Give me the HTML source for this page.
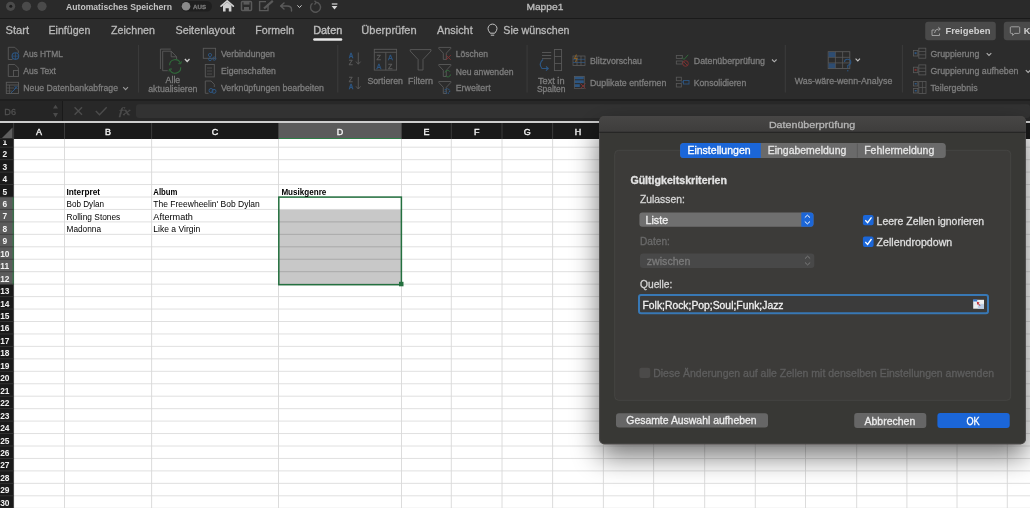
<!DOCTYPE html>
<html><head><meta charset="utf-8"><style>
html,body{margin:0;padding:0;background:#2a2a2a;width:1030px;height:508px;overflow:hidden}
svg{display:block;will-change:transform}
text{font-family:"Liberation Sans", sans-serif}
</style></head><body>
<svg width="1030" height="508" viewBox="0 0 1030 508">
<rect x="0.00" y="0.00" width="1030.00" height="18.00" fill="#2a2a2a"/>
<rect x="0.00" y="18.00" width="1030.00" height="1.00" fill="#1a1a1a"/>
<rect x="0.00" y="19.00" width="1030.00" height="80.00" fill="#2c2c2c"/>
<rect x="0.00" y="99.00" width="1030.00" height="2.00" fill="#1f1f1f"/>
<circle cx="10.6" cy="6.3" r="4.6" fill="#4a4a4a"/>
<circle cx="26.5" cy="6.3" r="4.6" fill="#4a4a4a"/>
<circle cx="42" cy="6.3" r="4.6" fill="#4a4a4a"/>
<circle cx="10.8" cy="6.3" r="1.5" fill="#1c1c1c"/>
<text x="66.00" y="9.60" font-size="8.8" fill="#c4c4c4" font-weight="bold" textLength="106.00" lengthAdjust="spacingAndGlyphs">Automatisches Speichern</text>
<rect x="181.00" y="1.00" width="31.00" height="10.50" fill="#1f1f1f" rx="5.2"/>
<circle cx="186" cy="6.3" r="4.3" fill="#8a8a8a"/>
<text x="193.00" y="8.70" font-size="6" fill="#7a7a7a" font-weight="bold" textLength="13.00" lengthAdjust="spacingAndGlyphs" stroke="#7a7a7a" stroke-width="0.3">AUS</text>
<text x="526.40" y="10.20" font-size="9.6" fill="#bdbdbd" textLength="37.00" lengthAdjust="spacingAndGlyphs" stroke="#bdbdbd" stroke-width="0.3">Mappe1</text>
<text x="5.50" y="34.20" font-size="11" fill="#b9b9b9" textLength="23.50" lengthAdjust="spacingAndGlyphs" stroke="#b9b9b9" stroke-width="0.3">Start</text>
<text x="48.50" y="34.20" font-size="11" fill="#b9b9b9" textLength="41.90" lengthAdjust="spacingAndGlyphs" stroke="#b9b9b9" stroke-width="0.3">Einfügen</text>
<text x="111.00" y="34.20" font-size="11" fill="#b9b9b9" textLength="44.00" lengthAdjust="spacingAndGlyphs" stroke="#b9b9b9" stroke-width="0.3">Zeichnen</text>
<text x="175.50" y="34.20" font-size="11" fill="#b9b9b9" textLength="59.50" lengthAdjust="spacingAndGlyphs" stroke="#b9b9b9" stroke-width="0.3">Seitenlayout</text>
<text x="255.30" y="34.20" font-size="11" fill="#b9b9b9" textLength="38.90" lengthAdjust="spacingAndGlyphs" stroke="#b9b9b9" stroke-width="0.3">Formeln</text>
<text x="313.20" y="34.20" font-size="11" fill="#bdbdbd" textLength="29.10" lengthAdjust="spacingAndGlyphs" stroke="#bdbdbd" stroke-width="0.4">Daten</text>
<text x="361.30" y="34.20" font-size="11" fill="#b9b9b9" textLength="55.30" lengthAdjust="spacingAndGlyphs" stroke="#b9b9b9" stroke-width="0.3">Überprüfen</text>
<text x="437.00" y="34.20" font-size="11" fill="#b9b9b9" textLength="35.70" lengthAdjust="spacingAndGlyphs" stroke="#b9b9b9" stroke-width="0.3">Ansicht</text>
<text x="503.30" y="34.20" font-size="11" fill="#b9b9b9" textLength="66.20" lengthAdjust="spacingAndGlyphs" stroke="#b9b9b9" stroke-width="0.3">Sie wünschen</text>
<rect x="313.20" y="38.30" width="29.10" height="2.40" fill="#e8e8e8" rx="1.2"/>
<path d="M490.2 33.2 Q488 30.5 488 28.6 A4.5 4.5 0 0 1 497 28.6 Q497 30.5 494.8 33.2 Z M490.8 35.2 L494.2 35.2" stroke="#c2c2c2" fill="none" stroke-width="1"/>
<text x="23.30" y="57.10" font-size="8.8" fill="#7e7e7e" textLength="39.60" lengthAdjust="spacingAndGlyphs" stroke="#7e7e7e" stroke-width="0.3">Aus HTML</text>
<text x="23.30" y="73.80" font-size="8.8" fill="#7e7e7e" textLength="32.60" lengthAdjust="spacingAndGlyphs" stroke="#7e7e7e" stroke-width="0.3">Aus Text</text>
<text x="23.30" y="90.80" font-size="8.8" fill="#7e7e7e" textLength="94.70" lengthAdjust="spacingAndGlyphs" stroke="#7e7e7e" stroke-width="0.3">Neue Datenbankabfrage</text>
<text x="165.60" y="83.40" font-size="8.8" fill="#7e7e7e" textLength="14.60" lengthAdjust="spacingAndGlyphs" stroke="#7e7e7e" stroke-width="0.3">Alle</text>
<text x="148.20" y="92.10" font-size="8.8" fill="#7e7e7e" textLength="49.30" lengthAdjust="spacingAndGlyphs" stroke="#7e7e7e" stroke-width="0.3">aktualisieren</text>
<text x="221.00" y="57.00" font-size="8.8" fill="#7e7e7e" textLength="54.00" lengthAdjust="spacingAndGlyphs" stroke="#7e7e7e" stroke-width="0.3">Verbindungen</text>
<text x="221.00" y="73.70" font-size="8.8" fill="#7e7e7e" textLength="54.90" lengthAdjust="spacingAndGlyphs" stroke="#7e7e7e" stroke-width="0.3">Eigenschaften</text>
<text x="221.00" y="90.50" font-size="8.8" fill="#7e7e7e" textLength="103.00" lengthAdjust="spacingAndGlyphs" stroke="#7e7e7e" stroke-width="0.3">Verknüpfungen bearbeiten</text>
<text x="367.40" y="83.60" font-size="8.8" fill="#7e7e7e" textLength="35.60" lengthAdjust="spacingAndGlyphs" stroke="#7e7e7e" stroke-width="0.3">Sortieren</text>
<text x="408.00" y="83.60" font-size="8.8" fill="#7e7e7e" textLength="25.00" lengthAdjust="spacingAndGlyphs" stroke="#7e7e7e" stroke-width="0.3">Filtern</text>
<text x="455.70" y="56.80" font-size="8.8" fill="#7e7e7e" textLength="32.30" lengthAdjust="spacingAndGlyphs" stroke="#7e7e7e" stroke-width="0.3">Löschen</text>
<text x="455.70" y="74.50" font-size="8.8" fill="#7e7e7e" textLength="57.80" lengthAdjust="spacingAndGlyphs" stroke="#7e7e7e" stroke-width="0.3">Neu anwenden</text>
<text x="455.70" y="91.40" font-size="8.8" fill="#7e7e7e" textLength="35.00" lengthAdjust="spacingAndGlyphs" stroke="#7e7e7e" stroke-width="0.3">Erweitert</text>
<text x="538.00" y="83.60" font-size="8.8" fill="#7e7e7e" textLength="26.50" lengthAdjust="spacingAndGlyphs" stroke="#7e7e7e" stroke-width="0.3">Text in</text>
<text x="536.90" y="91.80" font-size="8.8" fill="#7e7e7e" textLength="28.60" lengthAdjust="spacingAndGlyphs" stroke="#7e7e7e" stroke-width="0.3">Spalten</text>
<text x="590.00" y="64.30" font-size="8.8" fill="#7e7e7e" textLength="52.00" lengthAdjust="spacingAndGlyphs" stroke="#7e7e7e" stroke-width="0.3">Blitzvorschau</text>
<text x="590.00" y="85.70" font-size="8.8" fill="#7e7e7e" textLength="76.40" lengthAdjust="spacingAndGlyphs" stroke="#7e7e7e" stroke-width="0.3">Duplikate entfernen</text>
<text x="693.80" y="63.90" font-size="8.8" fill="#7e7e7e" textLength="71.20" lengthAdjust="spacingAndGlyphs" stroke="#7e7e7e" stroke-width="0.3">Datenüberprüfung</text>
<text x="693.80" y="85.90" font-size="8.8" fill="#7e7e7e" textLength="52.40" lengthAdjust="spacingAndGlyphs" stroke="#7e7e7e" stroke-width="0.3">Konsolidieren</text>
<text x="794.80" y="83.50" font-size="8.8" fill="#7e7e7e" textLength="97.50" lengthAdjust="spacingAndGlyphs" stroke="#7e7e7e" stroke-width="0.3">Was-wäre-wenn-Analyse</text>
<text x="930.40" y="57.30" font-size="8.8" fill="#7e7e7e" textLength="48.90" lengthAdjust="spacingAndGlyphs" stroke="#7e7e7e" stroke-width="0.3">Gruppierung</text>
<text x="930.40" y="74.10" font-size="8.8" fill="#7e7e7e" textLength="88.10" lengthAdjust="spacingAndGlyphs" stroke="#7e7e7e" stroke-width="0.3">Gruppierung aufheben</text>
<text x="930.40" y="91.10" font-size="8.8" fill="#7e7e7e" textLength="47.20" lengthAdjust="spacingAndGlyphs" stroke="#7e7e7e" stroke-width="0.3">Teilergebnis</text>
<line x1="138.60" y1="45.00" x2="138.60" y2="92.50" stroke="#3c3c3c" stroke-width="1"/>
<line x1="337.80" y1="45.00" x2="337.80" y2="92.50" stroke="#3c3c3c" stroke-width="1"/>
<line x1="527.10" y1="45.00" x2="527.10" y2="92.50" stroke="#3c3c3c" stroke-width="1"/>
<line x1="785.30" y1="45.00" x2="785.30" y2="92.50" stroke="#3c3c3c" stroke-width="1"/>
<line x1="902.40" y1="45.00" x2="902.40" y2="92.50" stroke="#3c3c3c" stroke-width="1"/>
<rect x="925.20" y="21.70" width="70.60" height="18.50" fill="#4a4a4a" rx="3"/>
<text x="945.40" y="33.90" font-size="9.2" fill="#cfcfcf" font-weight="bold" textLength="45.10" lengthAdjust="spacingAndGlyphs">Freigeben</text>
<rect x="1003.80" y="21.70" width="40.00" height="18.50" fill="#4a4a4a" rx="3"/>
<text x="1023.80" y="33.90" font-size="9.2" fill="#cfcfcf" font-weight="bold">K</text>
<path d="M221.1 6.2 L227.2 0.9 L233.3 6.2" stroke="#d0d0d0" fill="none" stroke-width="1.7" stroke-linejoin="round" stroke-linecap="round"/>
<path d="M223 5.6 L227.2 2 L231.4 5.6 L231.4 11.5 L228.8 11.5 L228.8 8.2 L225.6 8.2 L225.6 11.5 L223 11.5 Z" stroke="none" fill="#d0d0d0" stroke-width="1"/>
<rect x="241.50" y="1.60" width="10.00" height="9.00" fill="none" rx="1" stroke="#5a5a5a" stroke-width="1.5"/>
<rect x="243.50" y="1.60" width="6.00" height="3.00" fill="#5a5a5a"/>
<rect x="244.00" y="7.00" width="5.00" height="3.50" fill="#5a5a5a"/>
<path d="M268 4 L268 10.6 L259.6 10.6 L259.6 1.6 L266 1.6" stroke="#5a5a5a" fill="none" stroke-width="1.4"/>
<path d="M264 8.5 L272.8 0.8" stroke="#5a5a5a" fill="none" stroke-width="2.2"/>
<path d="M284 3 L280.6 6 L284 9 M281 6 L287 6 Q291.5 6 291.5 9.5 L291.5 11" stroke="#5a5a5a" fill="none" stroke-width="1.4" stroke-linecap="round" stroke-linejoin="round"/>
<path d="M297.4 5.3 L299.5 7.6 L301.6 5.3" stroke="#c4c4c4" fill="none" stroke-width="1.0"/>
<path d="M312.5 3.2 A5 5 0 1 0 316 2.2 M314.5 0.8 L316.2 2.3 L314.5 4.6" stroke="#555555" fill="none" stroke-width="1.4"/>
<rect x="331.80" y="3.40" width="5.60" height="1.20" fill="#d8d8d8"/>
<path d="M331.6 6 L337.4 6 L334.5 9.6 Z" stroke="none" fill="#d8d8d8" stroke-width="1"/>
<path d="M8.3 47.3 L14.8 47.3 L18.3 50.8 L18.3 53 M8.3 47.3 L8.3 59.5 L12.5 59.5" stroke="#5a5a5a" fill="none" stroke-width="0.9"/>
<circle cx="15.4" cy="56.1" r="3.3" fill="none" stroke="#2d5682" stroke-width="1.1"/>
<line x1="12.10" y1="56.10" x2="18.70" y2="56.10" stroke="#2d5682" stroke-width="0.8"/>
<line x1="15.40" y1="52.80" x2="15.40" y2="59.40" stroke="#2d5682" stroke-width="0.8"/>
<path d="M8.3 64.5 L14.8 64.5 L18.3 68 L18.3 70 M8.3 64.5 L8.3 76.5 L13 76.5" stroke="#5a5a5a" fill="none" stroke-width="0.9"/>
<rect x="13.50" y="70.50" width="5.00" height="6.00" fill="none" stroke="#5a5a5a" stroke-width="0.9"/>
<rect x="6.30" y="82.30" width="12.20" height="11.20" fill="none" stroke="#5a5a5a" stroke-width="0.9"/>
<line x1="6.30" y1="85.00" x2="18.50" y2="85.00" stroke="#5a5a5a" stroke-width="0.9"/>
<line x1="6.30" y1="88.00" x2="14.00" y2="88.00" stroke="#5a5a5a" stroke-width="0.7"/>
<line x1="6.30" y1="91.00" x2="12.00" y2="91.00" stroke="#5a5a5a" stroke-width="0.7"/>
<line x1="9.50" y1="85.00" x2="9.50" y2="93.50" stroke="#5a5a5a" stroke-width="0.7"/>
<path d="M11 93 L16 88 M14.5 86 L17.5 89 M17.5 86 L14.5 89" stroke="#2d5682" fill="none" stroke-width="1"/>
<path d="M123.2 87.2 L125.6 89.6 L128 87.2" stroke="#9a9a9a" fill="none" stroke-width="1.1"/>
<path d="M160.4 69 L160.4 49.1 L170.7 49.1" stroke="#5a5a5a" fill="none" stroke-width="0.9"/>
<path d="M167.7 70.7 L162.7 70.7 L162.7 51.2 L171.2 51.2 L176.6 56.8 L176.6 59.2 M171.2 51.2 L171.2 56.8 L176.6 56.8" stroke="#5a5a5a" fill="none" stroke-width="0.9"/>
<path d="M169.6 65.2 A5.6 5.6 0 0 1 180.4 63.2 M180.7 67.3 A5.6 5.6 0 0 1 169.8 69.4" stroke="#306a3a" fill="none" stroke-width="1.1"/>
<path d="M178.3 63.6 L180.8 63.8 L181.4 61.3 M172 69 L169.5 69 L169 71.5" stroke="#306a3a" fill="none" stroke-width="1"/>
<path d="M184.9 59.1 L187.2 61.4 L189.5 59.1" stroke="#cfcfcf" fill="none" stroke-width="1.4"/>
<rect x="203.30" y="48.30" width="12.30" height="10.00" fill="none" stroke="#5a5a5a" stroke-width="0.9"/>
<circle cx="210" cy="55" r="1.6" fill="none" stroke="#2d5682" stroke-width="0.9"/><circle cx="214.3" cy="58.6" r="1.6" fill="none" stroke="#2d5682" stroke-width="0.9"/><circle cx="210" cy="59.3" r="1.4" fill="none" stroke="#2d5682" stroke-width="0.9"/>
<rect x="205.30" y="64.50" width="9.00" height="12.40" fill="none" stroke="#5a5a5a" stroke-width="0.9"/>
<line x1="207.00" y1="68.00" x2="212.00" y2="68.00" stroke="#5a5a5a" stroke-width="0.7"/>
<line x1="207.00" y1="71.00" x2="212.00" y2="71.00" stroke="#5a5a5a" stroke-width="0.7"/>
<line x1="207.00" y1="74.00" x2="212.00" y2="74.00" stroke="#5a5a5a" stroke-width="0.7"/>
<path d="M205.3 81 L211 81 L214.3 84.3 L214.3 87 M205.3 81 L205.3 93.3 L208.5 93.3" stroke="#5a5a5a" fill="none" stroke-width="0.9"/>
<circle cx="211" cy="90.5" r="2" fill="none" stroke="#2d5682" stroke-width="1"/><circle cx="214" cy="91.3" r="2" fill="none" stroke="#2d5682" stroke-width="1"/>
<text x="348.80" y="57.60" font-size="6.4" fill="#2d5682" font-weight="bold" stroke="#2d5682" stroke-width="0.3">A</text>
<text x="348.80" y="64.60" font-size="6.4" fill="#5a5a5a" stroke="#5a5a5a" stroke-width="0.3">Z</text>
<path d="M358.3 52.5 L358.3 64.2 M356 61.6 L358.3 64.2 L360.6 61.6" stroke="#5a5a5a" fill="none" stroke-width="0.9"/>
<text x="348.80" y="82.00" font-size="6.4" fill="#5a5a5a" stroke="#5a5a5a" stroke-width="0.3">Z</text>
<text x="348.80" y="89.40" font-size="6.4" fill="#2d5682" font-weight="bold" stroke="#2d5682" stroke-width="0.3">A</text>
<path d="M358.3 77 L358.3 89 M356 86.4 L358.3 89 L360.6 86.4" stroke="#5a5a5a" fill="none" stroke-width="0.9"/>
<rect x="374.30" y="49.30" width="22.30" height="20.80" fill="none" stroke="#5a5a5a" stroke-width="0.9"/>
<line x1="374.30" y1="52.30" x2="396.60" y2="52.30" stroke="#5a5a5a" stroke-width="0.9"/>
<line x1="385.80" y1="52.30" x2="385.80" y2="70.10" stroke="#5a5a5a" stroke-width="0.9"/>
<text x="376.60" y="60.30" font-size="7.2" fill="#5a5a5a" stroke="#5a5a5a" stroke-width="0.3">Z</text>
<text x="376.60" y="68.60" font-size="7.2" fill="#2d5682" stroke="#2d5682" stroke-width="0.3">A</text>
<text x="388.10" y="60.30" font-size="7.2" fill="#2d5682" stroke="#2d5682" stroke-width="0.3">A</text>
<text x="388.10" y="68.60" font-size="7.2" fill="#5a5a5a" stroke="#5a5a5a" stroke-width="0.3">Z</text>
<path d="M410.2 49.6 L431 49.6 L431 51 L423 59.5 L423 70 L418.1 70 L418.1 59.5 L410.2 51 Z" stroke="#5a5a5a" fill="none" stroke-width="0.9"/>
<path d="M438.8 47.4 L450.8 47.4 L450.8 48.4 L446.3 53.199999999999996 L446.3 59.4 L443.3 59.4 L443.3 53.199999999999996 L438.8 48.4 Z" stroke="#5a5a5a" fill="none" stroke-width="0.9"/>
<path d="M446 55.2 L450.8 59.8 M450.8 55.2 L446 59.8" stroke="#7e3030" fill="none" stroke-width="1"/>
<path d="M438.8 64.5 L450.8 64.5 L450.8 65.5 L446.3 70.3 L446.3 76.5 L443.3 76.5 L443.3 70.3 L438.8 65.5 Z" stroke="#5a5a5a" fill="none" stroke-width="0.9"/>
<path d="M445 72.5 A2.7 2.7 0 0 1 450 71.8 M450.5 74.5 A2.7 2.7 0 0 1 445.6 75.8" stroke="#306a3a" fill="none" stroke-width="1"/>
<path d="M438.8 81.5 L450.8 81.5 L450.8 82.5 L446.3 87.3 L446.3 93.5 L443.3 93.5 L443.3 87.3 L438.8 82.5 Z" stroke="#5a5a5a" fill="none" stroke-width="0.9"/>
<circle cx="447.3" cy="91" r="2.3" fill="none" stroke="#2d5682" stroke-width="1.3" stroke-dasharray="1 0.8"/>
<line x1="542.00" y1="52.50" x2="551.20" y2="52.50" stroke="#5a5a5a" stroke-width="0.9"/>
<line x1="542.00" y1="55.50" x2="551.20" y2="55.50" stroke="#5a5a5a" stroke-width="0.9"/>
<line x1="542.00" y1="58.60" x2="551.20" y2="58.60" stroke="#5a5a5a" stroke-width="0.9"/>
<rect x="554.40" y="49.50" width="7.20" height="21.10" fill="none" stroke="#5a5a5a" stroke-width="0.9"/>
<line x1="554.40" y1="56.50" x2="561.60" y2="56.50" stroke="#5a5a5a" stroke-width="0.8"/>
<line x1="554.40" y1="63.50" x2="561.60" y2="63.50" stroke="#5a5a5a" stroke-width="0.8"/>
<path d="M543 59.5 Q538 64 542 68.5 L548 68.5 M546 66.5 L548.3 68.5 L546 70.7" stroke="#2d5682" fill="none" stroke-width="1.1"/>
<rect x="573.00" y="56.00" width="12.00" height="9.50" fill="none" stroke="#5a5a5a" stroke-width="0.8"/>
<line x1="573.00" y1="59.30" x2="585.00" y2="59.30" stroke="#2d5682" stroke-width="0.8"/>
<line x1="573.00" y1="62.50" x2="585.00" y2="62.50" stroke="#2d5682" stroke-width="0.8"/>
<line x1="577.00" y1="56.00" x2="577.00" y2="65.50" stroke="#5a5a5a" stroke-width="0.8"/>
<line x1="581.00" y1="56.00" x2="581.00" y2="65.50" stroke="#5a5a5a" stroke-width="0.8"/>
<path d="M576.5 54.5 L574.5 58.5 L577 58.5 L575.5 62" stroke="#86602a" fill="none" stroke-width="1.1"/>
<rect x="574.30" y="76.30" width="9.50" height="3.00" fill="#2d5682"/>
<rect x="574.30" y="80.30" width="9.50" height="2.80" fill="#2d5682"/>
<rect x="574.30" y="84.20" width="5.50" height="2.80" fill="#2d5682"/>
<rect x="574.30" y="76.30" width="10.00" height="12.30" fill="none" stroke="#5a5a5a" stroke-width="0.7"/>
<path d="M580.5 83.5 L585.5 88.6 M585.5 83.5 L580.5 88.6" stroke="#7e3030" fill="none" stroke-width="1"/>
<rect x="676.30" y="55.50" width="6.00" height="3.00" fill="none" stroke="#5a5a5a" stroke-width="0.8"/>
<rect x="676.30" y="61.00" width="6.00" height="3.00" fill="none" stroke="#5a5a5a" stroke-width="0.8"/>
<path d="M682 57.5 L684 59.5 L688.2 54.8" stroke="#306a3a" fill="none" stroke-width="1"/>
<circle cx="685.5" cy="63.5" r="2.8" fill="none" stroke="#7e3030" stroke-width="1"/>
<line x1="683.50" y1="61.50" x2="687.50" y2="65.50" stroke="#7e3030" stroke-width="0.9"/>
<path d="M772 59.5 L774.3 61.8 L776.6 59.5" stroke="#b0b0b0" fill="none" stroke-width="1.1"/>
<rect x="676.30" y="77.20" width="5.00" height="3.50" fill="none" stroke="#5a5a5a" stroke-width="0.8"/>
<rect x="676.30" y="83.50" width="5.00" height="3.50" fill="none" stroke="#5a5a5a" stroke-width="0.8"/>
<rect x="683.50" y="80.50" width="5.50" height="3.50" fill="none" stroke="#2d5682" stroke-width="0.9"/>
<line x1="681.00" y1="82.00" x2="683.50" y2="82.00" stroke="#2d5682" stroke-width="0.9"/>
<rect x="828.20" y="51.70" width="21.60" height="16.80" fill="none" stroke="#5a5a5a" stroke-width="0.9"/>
<line x1="835.40" y1="51.70" x2="835.40" y2="68.50" stroke="#5a5a5a" stroke-width="0.8"/>
<line x1="842.60" y1="51.70" x2="842.60" y2="68.50" stroke="#5a5a5a" stroke-width="0.8"/>
<line x1="828.20" y1="57.30" x2="849.80" y2="57.30" stroke="#5a5a5a" stroke-width="0.8"/>
<line x1="828.20" y1="62.90" x2="849.80" y2="62.90" stroke="#5a5a5a" stroke-width="0.8"/>
<rect x="828.60" y="52.10" width="6.60" height="5.00" fill="#2e4d72"/>
<rect x="828.60" y="63.30" width="6.60" height="4.80" fill="#2e4d72"/>
<path d="M844.5 62 Q844.5 59.3 847.6 59.3 Q850.8 59.3 850.8 62.2 Q850.8 64.3 847.8 65.5 L847.8 68.2" stroke="#2d5682" fill="none" stroke-width="1.1"/>
<circle cx="847.8" cy="70.7" r="0.7" fill="#2d5682"/>
<path d="M855.6 58.7 L857.8 60.9 L860 58.7" stroke="#c4c4c4" fill="none" stroke-width="1.1"/>
<rect x="913.40" y="50.50" width="4.50" height="5.50" fill="none" stroke="#5a5a5a" stroke-width="0.8"/>
<rect x="918.80" y="48.20" width="7.00" height="10.00" fill="none" stroke="#5a5a5a" stroke-width="0.8"/>
<line x1="918.80" y1="51.50" x2="925.80" y2="51.50" stroke="#5a5a5a" stroke-width="0.7"/>
<line x1="918.80" y1="54.80" x2="925.80" y2="54.80" stroke="#5a5a5a" stroke-width="0.7"/>
<rect x="914.60" y="52.20" width="2.00" height="2.00" fill="#2d5682"/>
<rect x="913.40" y="67.20" width="4.50" height="5.50" fill="none" stroke="#5a5a5a" stroke-width="0.8"/>
<rect x="918.80" y="64.90" width="7.00" height="10.00" fill="none" stroke="#5a5a5a" stroke-width="0.8"/>
<line x1="918.80" y1="68.20" x2="925.80" y2="68.20" stroke="#5a5a5a" stroke-width="0.7"/>
<line x1="918.80" y1="71.50" x2="925.80" y2="71.50" stroke="#5a5a5a" stroke-width="0.7"/>
<rect x="914.60" y="68.90" width="2.00" height="2.00" fill="#7e3030"/>
<rect x="913.40" y="81.50" width="4.50" height="4.50" fill="none" stroke="#5a5a5a" stroke-width="0.8"/>
<rect x="913.40" y="88.50" width="4.50" height="4.50" fill="none" stroke="#5a5a5a" stroke-width="0.8"/>
<rect x="918.80" y="81.50" width="7.20" height="12.00" fill="none" stroke="#5a5a5a" stroke-width="0.8"/>
<line x1="922.40" y1="81.50" x2="922.40" y2="93.50" stroke="#5a5a5a" stroke-width="0.7"/>
<line x1="918.80" y1="87.50" x2="926.00" y2="87.50" stroke="#5a5a5a" stroke-width="0.7"/>
<rect x="914.70" y="83.00" width="2.00" height="1.50" fill="#2d5682"/>
<rect x="914.70" y="90.00" width="2.00" height="1.50" fill="#2d5682"/>
<path d="M986.7 53.2 L989 55.5 L991.3 53.2" stroke="#b0b0b0" fill="none" stroke-width="1.1"/>
<path d="M1025.8 70.2 L1028.1 72.5 L1030.4 70.2" stroke="#b0b0b0" fill="none" stroke-width="1.1"/>
<path d="M934.5 30 L932 30 L932 35.5 L939.5 35.5 L939.5 33.5" stroke="#a8a8a8" fill="none" stroke-width="0.9"/>
<path d="M934.5 33 Q935 29 938.5 29 L940 29 M938.3 27.2 L940.3 29 L938.3 30.8" stroke="#a8a8a8" fill="none" stroke-width="0.9"/>
<path d="M1011.2 26.8 L1018.8 26.8 Q1019.7 26.8 1019.7 27.7 L1019.7 32.5 Q1019.7 33.4 1018.8 33.4 L1014.8 33.4 L1012.6 35.4 L1012.6 33.4 L1011.2 33.4 Q1010.3 33.4 1010.3 32.5 L1010.3 27.7 Q1010.3 26.8 1011.2 26.8 Z" stroke="#a8a8a8" fill="none" stroke-width="0.9"/>
<rect x="0.00" y="101.00" width="1030.00" height="20.00" fill="#282828"/>
<rect x="0.00" y="101.00" width="62.00" height="20.00" fill="#252525"/>
<line x1="62.50" y1="101.00" x2="62.50" y2="121.00" stroke="#1a1a1a" stroke-width="1"/>
<text x="4.30" y="115.20" font-size="9.5" fill="#505050" textLength="11.70" lengthAdjust="spacingAndGlyphs" stroke="#505050" stroke-width="0.3">D6</text>
<rect x="136.00" y="104.30" width="894.00" height="13.70" fill="#323232" rx="3"/>
<rect x="0.00" y="121.00" width="1030.00" height="2.00" fill="#cdcdcd"/>
<text x="118.80" y="115.40" font-size="11" fill="#4c4c4c" textLength="11.70" lengthAdjust="spacingAndGlyphs" style="font-family:Liberation Serif,serif;font-style:italic" stroke="#4c4c4c" stroke-width="0.3">fx</text>
<path d="M53 108.6 L55.5 104.8 L58 108.6 Z M53 113 L58 113 L55.5 117.4 Z" stroke="none" fill="#4a4a4a" stroke-width="1"/>
<path d="M74.6 107.3 L82 114.7 M82 107.3 L74.6 114.7" stroke="#4c4c4c" fill="none" stroke-width="1.4"/>
<path d="M95.8 111 L99.5 114.7 L106.7 107.3" stroke="#4c4c4c" fill="none" stroke-width="1.4"/>
<rect x="0.00" y="123.00" width="1030.00" height="385.00" fill="#ffffff"/>
<line x1="13.60" y1="147.20" x2="1030.00" y2="147.20" stroke="#dcdcdc" stroke-width="0.9"/>
<line x1="13.60" y1="159.65" x2="1030.00" y2="159.65" stroke="#dcdcdc" stroke-width="0.9"/>
<line x1="13.60" y1="172.10" x2="1030.00" y2="172.10" stroke="#dcdcdc" stroke-width="0.9"/>
<line x1="13.60" y1="184.55" x2="1030.00" y2="184.55" stroke="#dcdcdc" stroke-width="0.9"/>
<line x1="13.60" y1="197.00" x2="1030.00" y2="197.00" stroke="#dcdcdc" stroke-width="0.9"/>
<line x1="13.60" y1="209.45" x2="1030.00" y2="209.45" stroke="#dcdcdc" stroke-width="0.9"/>
<line x1="13.60" y1="221.90" x2="1030.00" y2="221.90" stroke="#dcdcdc" stroke-width="0.9"/>
<line x1="13.60" y1="234.35" x2="1030.00" y2="234.35" stroke="#dcdcdc" stroke-width="0.9"/>
<line x1="13.60" y1="246.80" x2="1030.00" y2="246.80" stroke="#dcdcdc" stroke-width="0.9"/>
<line x1="13.60" y1="259.25" x2="1030.00" y2="259.25" stroke="#dcdcdc" stroke-width="0.9"/>
<line x1="13.60" y1="271.70" x2="1030.00" y2="271.70" stroke="#dcdcdc" stroke-width="0.9"/>
<line x1="13.60" y1="284.15" x2="1030.00" y2="284.15" stroke="#dcdcdc" stroke-width="0.9"/>
<line x1="13.60" y1="296.60" x2="1030.00" y2="296.60" stroke="#dcdcdc" stroke-width="0.9"/>
<line x1="13.60" y1="309.05" x2="1030.00" y2="309.05" stroke="#dcdcdc" stroke-width="0.9"/>
<line x1="13.60" y1="321.50" x2="1030.00" y2="321.50" stroke="#dcdcdc" stroke-width="0.9"/>
<line x1="13.60" y1="333.95" x2="1030.00" y2="333.95" stroke="#dcdcdc" stroke-width="0.9"/>
<line x1="13.60" y1="346.40" x2="1030.00" y2="346.40" stroke="#dcdcdc" stroke-width="0.9"/>
<line x1="13.60" y1="358.85" x2="1030.00" y2="358.85" stroke="#dcdcdc" stroke-width="0.9"/>
<line x1="13.60" y1="371.30" x2="1030.00" y2="371.30" stroke="#dcdcdc" stroke-width="0.9"/>
<line x1="13.60" y1="383.75" x2="1030.00" y2="383.75" stroke="#dcdcdc" stroke-width="0.9"/>
<line x1="13.60" y1="396.20" x2="1030.00" y2="396.20" stroke="#dcdcdc" stroke-width="0.9"/>
<line x1="13.60" y1="408.65" x2="1030.00" y2="408.65" stroke="#dcdcdc" stroke-width="0.9"/>
<line x1="13.60" y1="421.10" x2="1030.00" y2="421.10" stroke="#dcdcdc" stroke-width="0.9"/>
<line x1="13.60" y1="433.55" x2="1030.00" y2="433.55" stroke="#dcdcdc" stroke-width="0.9"/>
<line x1="13.60" y1="446.00" x2="1030.00" y2="446.00" stroke="#dcdcdc" stroke-width="0.9"/>
<line x1="13.60" y1="458.45" x2="1030.00" y2="458.45" stroke="#dcdcdc" stroke-width="0.9"/>
<line x1="13.60" y1="470.90" x2="1030.00" y2="470.90" stroke="#dcdcdc" stroke-width="0.9"/>
<line x1="13.60" y1="483.35" x2="1030.00" y2="483.35" stroke="#dcdcdc" stroke-width="0.9"/>
<line x1="13.60" y1="495.80" x2="1030.00" y2="495.80" stroke="#dcdcdc" stroke-width="0.9"/>
<line x1="13.60" y1="508.25" x2="1030.00" y2="508.25" stroke="#dcdcdc" stroke-width="0.9"/>
<line x1="64.50" y1="139.00" x2="64.50" y2="508.00" stroke="#d8d8d8" stroke-width="0.9"/>
<line x1="151.60" y1="139.00" x2="151.60" y2="508.00" stroke="#d8d8d8" stroke-width="0.9"/>
<line x1="278.50" y1="139.00" x2="278.50" y2="508.00" stroke="#d8d8d8" stroke-width="0.9"/>
<line x1="401.50" y1="139.00" x2="401.50" y2="508.00" stroke="#d8d8d8" stroke-width="0.9"/>
<line x1="451.30" y1="139.00" x2="451.30" y2="508.00" stroke="#d8d8d8" stroke-width="0.9"/>
<line x1="502.00" y1="139.00" x2="502.00" y2="508.00" stroke="#d8d8d8" stroke-width="0.9"/>
<line x1="552.60" y1="139.00" x2="552.60" y2="508.00" stroke="#d8d8d8" stroke-width="0.9"/>
<line x1="603.40" y1="139.00" x2="603.40" y2="508.00" stroke="#d8d8d8" stroke-width="0.9"/>
<line x1="653.60" y1="139.00" x2="653.60" y2="508.00" stroke="#d8d8d8" stroke-width="0.9"/>
<line x1="704.70" y1="139.00" x2="704.70" y2="508.00" stroke="#d8d8d8" stroke-width="0.9"/>
<line x1="755.30" y1="139.00" x2="755.30" y2="508.00" stroke="#d8d8d8" stroke-width="0.9"/>
<line x1="805.50" y1="139.00" x2="805.50" y2="508.00" stroke="#d8d8d8" stroke-width="0.9"/>
<line x1="856.70" y1="139.00" x2="856.70" y2="508.00" stroke="#d8d8d8" stroke-width="0.9"/>
<line x1="906.90" y1="139.00" x2="906.90" y2="508.00" stroke="#d8d8d8" stroke-width="0.9"/>
<line x1="957.00" y1="139.00" x2="957.00" y2="508.00" stroke="#d8d8d8" stroke-width="0.9"/>
<line x1="1007.30" y1="139.00" x2="1007.30" y2="508.00" stroke="#d8d8d8" stroke-width="0.9"/>
<rect x="0.00" y="123.00" width="1030.00" height="16.00" fill="#1a1a1a"/>
<rect x="278.50" y="123.00" width="123.00" height="16.00" fill="#5b5b5b"/>
<line x1="278.50" y1="138.50" x2="401.50" y2="138.50" stroke="#2d7d46" stroke-width="1"/>
<line x1="64.50" y1="123.00" x2="64.50" y2="139.00" stroke="#444444" stroke-width="0.8"/>
<line x1="151.60" y1="123.00" x2="151.60" y2="139.00" stroke="#444444" stroke-width="0.8"/>
<line x1="278.50" y1="123.00" x2="278.50" y2="139.00" stroke="#444444" stroke-width="0.8"/>
<line x1="401.50" y1="123.00" x2="401.50" y2="139.00" stroke="#444444" stroke-width="0.8"/>
<line x1="451.30" y1="123.00" x2="451.30" y2="139.00" stroke="#444444" stroke-width="0.8"/>
<line x1="502.00" y1="123.00" x2="502.00" y2="139.00" stroke="#444444" stroke-width="0.8"/>
<line x1="552.60" y1="123.00" x2="552.60" y2="139.00" stroke="#444444" stroke-width="0.8"/>
<line x1="603.40" y1="123.00" x2="603.40" y2="139.00" stroke="#444444" stroke-width="0.8"/>
<line x1="653.60" y1="123.00" x2="653.60" y2="139.00" stroke="#444444" stroke-width="0.8"/>
<line x1="704.70" y1="123.00" x2="704.70" y2="139.00" stroke="#444444" stroke-width="0.8"/>
<line x1="755.30" y1="123.00" x2="755.30" y2="139.00" stroke="#444444" stroke-width="0.8"/>
<line x1="805.50" y1="123.00" x2="805.50" y2="139.00" stroke="#444444" stroke-width="0.8"/>
<line x1="856.70" y1="123.00" x2="856.70" y2="139.00" stroke="#444444" stroke-width="0.8"/>
<line x1="906.90" y1="123.00" x2="906.90" y2="139.00" stroke="#444444" stroke-width="0.8"/>
<line x1="957.00" y1="123.00" x2="957.00" y2="139.00" stroke="#444444" stroke-width="0.8"/>
<line x1="1007.30" y1="123.00" x2="1007.30" y2="139.00" stroke="#444444" stroke-width="0.8"/>
<line x1="13.60" y1="139.00" x2="13.60" y2="508.00" stroke="#8c8c8c" stroke-width="1"/>
<line x1="13.60" y1="123.00" x2="13.60" y2="139.00" stroke="#444" stroke-width="0.8"/>
<line x1="0.00" y1="139.20" x2="13.60" y2="139.20" stroke="#5a5a5a" stroke-width="1"/>
<path d="M2 138 L12.5 127.5 L12.5 138 Z" stroke="none" fill="#5e5e5e" stroke-width="1"/>
<text x="39.05" y="134.90" font-size="9" fill="#f4f4f4" text-anchor="middle" stroke="#f4f4f4" stroke-width="0.35">A</text>
<text x="108.05" y="134.90" font-size="9" fill="#f4f4f4" text-anchor="middle" stroke="#f4f4f4" stroke-width="0.35">B</text>
<text x="215.05" y="134.90" font-size="9" fill="#f4f4f4" text-anchor="middle" stroke="#f4f4f4" stroke-width="0.35">C</text>
<text x="340.00" y="134.90" font-size="9" fill="#f4f4f4" text-anchor="middle" stroke="#f4f4f4" stroke-width="0.35">D</text>
<text x="426.40" y="134.90" font-size="9" fill="#f4f4f4" text-anchor="middle" stroke="#f4f4f4" stroke-width="0.35">E</text>
<text x="476.65" y="134.90" font-size="9" fill="#f4f4f4" text-anchor="middle" stroke="#f4f4f4" stroke-width="0.35">F</text>
<text x="527.30" y="134.90" font-size="9" fill="#f4f4f4" text-anchor="middle" stroke="#f4f4f4" stroke-width="0.35">G</text>
<text x="578.00" y="134.90" font-size="9" fill="#f4f4f4" text-anchor="middle" stroke="#f4f4f4" stroke-width="0.35">H</text>
<text x="628.50" y="134.90" font-size="9" fill="#f4f4f4" text-anchor="middle" stroke="#f4f4f4" stroke-width="0.35">I</text>
<text x="679.15" y="134.90" font-size="9" fill="#f4f4f4" text-anchor="middle" stroke="#f4f4f4" stroke-width="0.35">J</text>
<text x="730.00" y="134.90" font-size="9" fill="#f4f4f4" text-anchor="middle" stroke="#f4f4f4" stroke-width="0.35">K</text>
<text x="780.40" y="134.90" font-size="9" fill="#f4f4f4" text-anchor="middle" stroke="#f4f4f4" stroke-width="0.35">L</text>
<text x="831.10" y="134.90" font-size="9" fill="#f4f4f4" text-anchor="middle" stroke="#f4f4f4" stroke-width="0.35">M</text>
<text x="881.80" y="134.90" font-size="9" fill="#f4f4f4" text-anchor="middle" stroke="#f4f4f4" stroke-width="0.35">N</text>
<text x="931.95" y="134.90" font-size="9" fill="#f4f4f4" text-anchor="middle" stroke="#f4f4f4" stroke-width="0.35">O</text>
<text x="982.15" y="134.90" font-size="9" fill="#f4f4f4" text-anchor="middle" stroke="#f4f4f4" stroke-width="0.35">P</text>
<rect x="0.00" y="139.00" width="13.60" height="369.00" fill="#1a1a1a"/>
<rect x="0.00" y="197.00" width="13.60" height="87.40" fill="#5b5b5b"/>
<line x1="13.10" y1="197.00" x2="13.10" y2="284.60" stroke="#2d7d46" stroke-width="1"/>
<line x1="0.00" y1="147.20" x2="13.60" y2="147.20" stroke="#3a3a3a" stroke-width="0.8"/>
<line x1="0.00" y1="159.65" x2="13.60" y2="159.65" stroke="#3a3a3a" stroke-width="0.8"/>
<line x1="0.00" y1="172.10" x2="13.60" y2="172.10" stroke="#3a3a3a" stroke-width="0.8"/>
<line x1="0.00" y1="184.55" x2="13.60" y2="184.55" stroke="#3a3a3a" stroke-width="0.8"/>
<line x1="0.00" y1="197.00" x2="13.60" y2="197.00" stroke="#3a3a3a" stroke-width="0.8"/>
<line x1="0.00" y1="209.45" x2="13.60" y2="209.45" stroke="#3a3a3a" stroke-width="0.8"/>
<line x1="0.00" y1="221.90" x2="13.60" y2="221.90" stroke="#3a3a3a" stroke-width="0.8"/>
<line x1="0.00" y1="234.35" x2="13.60" y2="234.35" stroke="#3a3a3a" stroke-width="0.8"/>
<line x1="0.00" y1="246.80" x2="13.60" y2="246.80" stroke="#3a3a3a" stroke-width="0.8"/>
<line x1="0.00" y1="259.25" x2="13.60" y2="259.25" stroke="#3a3a3a" stroke-width="0.8"/>
<line x1="0.00" y1="271.70" x2="13.60" y2="271.70" stroke="#3a3a3a" stroke-width="0.8"/>
<line x1="0.00" y1="284.15" x2="13.60" y2="284.15" stroke="#3a3a3a" stroke-width="0.8"/>
<line x1="0.00" y1="296.60" x2="13.60" y2="296.60" stroke="#3a3a3a" stroke-width="0.8"/>
<line x1="0.00" y1="309.05" x2="13.60" y2="309.05" stroke="#3a3a3a" stroke-width="0.8"/>
<line x1="0.00" y1="321.50" x2="13.60" y2="321.50" stroke="#3a3a3a" stroke-width="0.8"/>
<line x1="0.00" y1="333.95" x2="13.60" y2="333.95" stroke="#3a3a3a" stroke-width="0.8"/>
<line x1="0.00" y1="346.40" x2="13.60" y2="346.40" stroke="#3a3a3a" stroke-width="0.8"/>
<line x1="0.00" y1="358.85" x2="13.60" y2="358.85" stroke="#3a3a3a" stroke-width="0.8"/>
<line x1="0.00" y1="371.30" x2="13.60" y2="371.30" stroke="#3a3a3a" stroke-width="0.8"/>
<line x1="0.00" y1="383.75" x2="13.60" y2="383.75" stroke="#3a3a3a" stroke-width="0.8"/>
<line x1="0.00" y1="396.20" x2="13.60" y2="396.20" stroke="#3a3a3a" stroke-width="0.8"/>
<line x1="0.00" y1="408.65" x2="13.60" y2="408.65" stroke="#3a3a3a" stroke-width="0.8"/>
<line x1="0.00" y1="421.10" x2="13.60" y2="421.10" stroke="#3a3a3a" stroke-width="0.8"/>
<line x1="0.00" y1="433.55" x2="13.60" y2="433.55" stroke="#3a3a3a" stroke-width="0.8"/>
<line x1="0.00" y1="446.00" x2="13.60" y2="446.00" stroke="#3a3a3a" stroke-width="0.8"/>
<line x1="0.00" y1="458.45" x2="13.60" y2="458.45" stroke="#3a3a3a" stroke-width="0.8"/>
<line x1="0.00" y1="470.90" x2="13.60" y2="470.90" stroke="#3a3a3a" stroke-width="0.8"/>
<line x1="0.00" y1="483.35" x2="13.60" y2="483.35" stroke="#3a3a3a" stroke-width="0.8"/>
<line x1="0.00" y1="495.80" x2="13.60" y2="495.80" stroke="#3a3a3a" stroke-width="0.8"/>
<line x1="0.00" y1="508.25" x2="13.60" y2="508.25" stroke="#3a3a3a" stroke-width="0.8"/>
<clipPath id="rh"><rect x="0" y="140.6" width="13.6" height="369"/></clipPath>
<g clip-path="url(#rh)">
<text x="4.80" y="144.70" font-size="8.4" fill="#f2f2f2" font-weight="bold" text-anchor="middle">1</text>
<text x="4.80" y="157.15" font-size="8.4" fill="#f2f2f2" font-weight="bold" text-anchor="middle">2</text>
<text x="4.80" y="169.60" font-size="8.4" fill="#f2f2f2" font-weight="bold" text-anchor="middle">3</text>
<text x="4.80" y="182.05" font-size="8.4" fill="#f2f2f2" font-weight="bold" text-anchor="middle">4</text>
<text x="4.80" y="194.50" font-size="8.4" fill="#f2f2f2" font-weight="bold" text-anchor="middle">5</text>
<text x="4.80" y="206.95" font-size="8.4" fill="#f2f2f2" font-weight="bold" text-anchor="middle">6</text>
<text x="4.80" y="219.40" font-size="8.4" fill="#f2f2f2" font-weight="bold" text-anchor="middle">7</text>
<text x="4.80" y="231.85" font-size="8.4" fill="#f2f2f2" font-weight="bold" text-anchor="middle">8</text>
<text x="4.80" y="244.30" font-size="8.4" fill="#f2f2f2" font-weight="bold" text-anchor="middle">9</text>
<text x="4.80" y="256.75" font-size="8.4" fill="#f2f2f2" font-weight="bold" text-anchor="middle">10</text>
<text x="4.80" y="269.20" font-size="8.4" fill="#f2f2f2" font-weight="bold" text-anchor="middle">11</text>
<text x="4.80" y="281.65" font-size="8.4" fill="#f2f2f2" font-weight="bold" text-anchor="middle">12</text>
<text x="4.80" y="294.10" font-size="8.4" fill="#f2f2f2" font-weight="bold" text-anchor="middle">13</text>
<text x="4.80" y="306.55" font-size="8.4" fill="#f2f2f2" font-weight="bold" text-anchor="middle">14</text>
<text x="4.80" y="319.00" font-size="8.4" fill="#f2f2f2" font-weight="bold" text-anchor="middle">15</text>
<text x="4.80" y="331.45" font-size="8.4" fill="#f2f2f2" font-weight="bold" text-anchor="middle">16</text>
<text x="4.80" y="343.90" font-size="8.4" fill="#f2f2f2" font-weight="bold" text-anchor="middle">17</text>
<text x="4.80" y="356.35" font-size="8.4" fill="#f2f2f2" font-weight="bold" text-anchor="middle">18</text>
<text x="4.80" y="368.80" font-size="8.4" fill="#f2f2f2" font-weight="bold" text-anchor="middle">19</text>
<text x="4.80" y="381.25" font-size="8.4" fill="#f2f2f2" font-weight="bold" text-anchor="middle">20</text>
<text x="4.80" y="393.70" font-size="8.4" fill="#f2f2f2" font-weight="bold" text-anchor="middle">21</text>
<text x="4.80" y="406.15" font-size="8.4" fill="#f2f2f2" font-weight="bold" text-anchor="middle">22</text>
<text x="4.80" y="418.60" font-size="8.4" fill="#f2f2f2" font-weight="bold" text-anchor="middle">23</text>
<text x="4.80" y="431.05" font-size="8.4" fill="#f2f2f2" font-weight="bold" text-anchor="middle">24</text>
<text x="4.80" y="443.50" font-size="8.4" fill="#f2f2f2" font-weight="bold" text-anchor="middle">25</text>
<text x="4.80" y="455.95" font-size="8.4" fill="#f2f2f2" font-weight="bold" text-anchor="middle">26</text>
<text x="4.80" y="468.40" font-size="8.4" fill="#f2f2f2" font-weight="bold" text-anchor="middle">27</text>
<text x="4.80" y="480.85" font-size="8.4" fill="#f2f2f2" font-weight="bold" text-anchor="middle">28</text>
<text x="4.80" y="493.30" font-size="8.4" fill="#f2f2f2" font-weight="bold" text-anchor="middle">29</text>
<text x="4.80" y="505.75" font-size="8.4" fill="#f2f2f2" font-weight="bold" text-anchor="middle">30</text>
</g>
<rect x="278.50" y="209.65" width="123.00" height="74.70" fill="#c8c8c8"/>
<line x1="278.50" y1="221.90" x2="401.50" y2="221.90" stroke="#a9a9a9" stroke-width="1"/>
<line x1="278.50" y1="234.35" x2="401.50" y2="234.35" stroke="#a9a9a9" stroke-width="1"/>
<line x1="278.50" y1="246.80" x2="401.50" y2="246.80" stroke="#a9a9a9" stroke-width="1"/>
<line x1="278.50" y1="259.25" x2="401.50" y2="259.25" stroke="#a9a9a9" stroke-width="1"/>
<line x1="278.50" y1="271.70" x2="401.50" y2="271.70" stroke="#a9a9a9" stroke-width="1"/>
<line x1="278.50" y1="284.15" x2="401.50" y2="284.15" stroke="#a9a9a9" stroke-width="1"/>
<rect x="278.80" y="197.10" width="122.60" height="87.60" fill="none" stroke="#24703f" stroke-width="1.5"/>
<rect x="399.00" y="281.80" width="4.50" height="4.50" fill="#24703f"/>
<text x="66.50" y="194.70" font-size="8.8" fill="#000000" font-weight="bold" textLength="33.50" lengthAdjust="spacingAndGlyphs">Interpret</text>
<text x="153.30" y="194.70" font-size="8.8" fill="#000000" font-weight="bold" textLength="24.10" lengthAdjust="spacingAndGlyphs">Album</text>
<text x="281.40" y="194.70" font-size="8.8" fill="#000000" font-weight="bold" textLength="44.90" lengthAdjust="spacingAndGlyphs">Musikgenre</text>
<text x="66.50" y="207.10" font-size="8.8" fill="#000000" textLength="37.50" lengthAdjust="spacingAndGlyphs">Bob Dylan</text>
<text x="66.50" y="219.60" font-size="8.8" fill="#000000" textLength="53.80" lengthAdjust="spacingAndGlyphs">Rolling Stones</text>
<text x="66.50" y="232.00" font-size="8.8" fill="#000000" textLength="34.50" lengthAdjust="spacingAndGlyphs">Madonna</text>
<text x="153.30" y="207.10" font-size="8.8" fill="#000000" textLength="106.50" lengthAdjust="spacingAndGlyphs">The Freewheelin' Bob Dylan</text>
<text x="153.30" y="219.60" font-size="8.8" fill="#000000" textLength="39.60" lengthAdjust="spacingAndGlyphs">Aftermath</text>
<text x="153.30" y="232.00" font-size="8.8" fill="#000000" textLength="46.90" lengthAdjust="spacingAndGlyphs">Like a Virgin</text>
<defs><filter id="sh" x="-30%" y="-30%" width="160%" height="170%"><feGaussianBlur in="SourceAlpha" stdDeviation="14"/><feOffset dy="12"/><feComponentTransfer><feFuncA type="linear" slope="0.55"/></feComponentTransfer><feMerge><feMergeNode/><feMergeNode in="SourceGraphic"/></feMerge></filter><linearGradient id="tb" x1="0" y1="0" x2="0" y2="1"><stop offset="0" stop-color="#474645"/><stop offset="1" stop-color="#3e3d3c"/></linearGradient></defs>
<rect x="599.20" y="116.20" width="426.60" height="328.10" fill="#383735" rx="5" filter="url(#sh)"/>
<rect x="599.60" y="116.60" width="425.80" height="327.30" fill="none" rx="5" stroke="#4e4d4c" stroke-width="0.8"/>
<path d="M599.2 121.2 Q599.2 116.2 604.2 116.2 L1020.8 116.2 Q1025.8 116.2 1025.8 121.2 L1025.8 132 L599.2 132 Z" fill="url(#tb)"/>
<line x1="599.20" y1="132.30" x2="1025.80" y2="132.30" stroke="#222222" stroke-width="1"/>
<text x="812.00" y="128.40" font-size="9.8" fill="#b5b5b5" text-anchor="middle" textLength="86.20" lengthAdjust="spacingAndGlyphs" stroke="#b5b5b5" stroke-width="0.3">Datenüberprüfung</text>
<rect x="614.70" y="150.30" width="396.00" height="250.00" fill="#3c3b39" rx="4" stroke="#484745" stroke-width="0.8"/>
<rect x="680.10" y="143.10" width="265.70" height="15.00" fill="#6a6a6a" rx="3.5"/>
<path d="M683.6 143.1 L760.8 143.1 L760.8 158.1 L683.6 158.1 Q680.1 158.1 680.1 154.6 L680.1 146.6 Q680.1 143.1 683.6 143.1 Z" fill="#1b66d8"/>
<line x1="857.30" y1="143.60" x2="857.30" y2="157.60" stroke="#575757" stroke-width="0.8"/>
<text x="687.40" y="154.40" font-size="10" fill="#ffffff" textLength="63.20" lengthAdjust="spacingAndGlyphs" stroke="#ffffff" stroke-width="0.3">Einstellungen</text>
<text x="767.70" y="154.40" font-size="10" fill="#e6e6e6" textLength="78.60" lengthAdjust="spacingAndGlyphs" stroke="#e6e6e6" stroke-width="0.3">Eingabemeldung</text>
<text x="864.20" y="154.40" font-size="10" fill="#e6e6e6" textLength="70.10" lengthAdjust="spacingAndGlyphs" stroke="#e6e6e6" stroke-width="0.3">Fehlermeldung</text>
<text x="630.40" y="183.80" font-size="10" fill="#e2e2e2" font-weight="bold" textLength="96.60" lengthAdjust="spacingAndGlyphs" stroke="#e2e2e2" stroke-width="0.3">Gültigkeitskriterien</text>
<text x="640.00" y="203.30" font-size="10" fill="#d4d4d4" textLength="44.80" lengthAdjust="spacingAndGlyphs" stroke="#d4d4d4" stroke-width="0.3">Zulassen:</text>
<rect x="639.40" y="212.40" width="174.10" height="14.30" fill="#6f6f6f" rx="3"/>
<path d="M801.3 212.4 L810.5 212.4 Q813.5 212.4 813.5 215.4 L813.5 223.7 Q813.5 226.7 810.5 226.7 L801.3 226.7 Z" fill="#1b66d8"/>
<path d="M804.8 217.6 L807.4 215.2 L810 217.6 M804.8 221.5 L807.4 223.9 L810 221.5" stroke="#ffffff" fill="none" stroke-width="1"/>
<text x="645.50" y="223.80" font-size="10" fill="#f0f0f0" textLength="22.70" lengthAdjust="spacingAndGlyphs" stroke="#f0f0f0" stroke-width="0.3">Liste</text>
<text x="640.00" y="244.60" font-size="10" fill="#6a6a6a" textLength="29.90" lengthAdjust="spacingAndGlyphs" stroke="#6a6a6a" stroke-width="0.3">Daten:</text>
<rect x="640.00" y="253.60" width="174.30" height="14.40" fill="#484848" rx="3"/>
<path d="M805 258.6 L807.6 256.2 L810.2 258.6 M805 262.5 L807.6 264.9 L810.2 262.5" stroke="#7a7a7a" fill="none" stroke-width="1"/>
<text x="646.80" y="265.20" font-size="10" fill="#7a7a7a" textLength="43.60" lengthAdjust="spacingAndGlyphs" stroke="#7a7a7a" stroke-width="0.3">zwischen</text>
<text x="640.00" y="287.50" font-size="10" fill="#d4d4d4" textLength="32.40" lengthAdjust="spacingAndGlyphs" stroke="#d4d4d4" stroke-width="0.3">Quelle:</text>
<rect x="862.90" y="214.90" width="10.70" height="10.40" fill="#1b66d8" rx="2"/>
<path d="M865.3 220.3 L867.6 222.70000000000002 L871.5 217.3" stroke="#ffffff" fill="none" stroke-width="1.3"/>
<rect x="862.90" y="236.60" width="10.70" height="10.40" fill="#1b66d8" rx="2"/>
<path d="M865.3 242.0 L867.6 244.4 L871.5 239.0" stroke="#ffffff" fill="none" stroke-width="1.3"/>
<text x="876.60" y="224.50" font-size="10" fill="#dedede" textLength="107.60" lengthAdjust="spacingAndGlyphs" stroke="#dedede" stroke-width="0.3">Leere Zellen ignorieren</text>
<text x="876.60" y="246.20" font-size="10" fill="#dedede" textLength="75.70" lengthAdjust="spacingAndGlyphs" stroke="#dedede" stroke-width="0.3">Zellendropdown</text>
<rect x="639.00" y="295.00" width="349.00" height="18.20" fill="#3b3b3b" rx="2" stroke="#3878b5" stroke-width="2"/>
<text x="642.50" y="309.00" font-size="10" fill="#f0f0f0" textLength="141.00" lengthAdjust="spacingAndGlyphs" stroke="#f0f0f0" stroke-width="0.3">Folk;Rock;Pop;Soul;Funk;Jazz</text>
<rect x="973.20" y="299.80" width="10.80" height="8.90" fill="#eef0f2"/>
<rect x="978.00" y="304.00" width="6.00" height="4.70" fill="#b9cde6"/>
<line x1="973.20" y1="304.00" x2="984.00" y2="304.00" stroke="#cfd8e2" stroke-width="0.5"/>
<line x1="978.00" y1="299.80" x2="978.00" y2="308.70" stroke="#cfd8e2" stroke-width="0.5"/>
<rect x="973.20" y="299.30" width="4.00" height="2.20" fill="#3a78c8"/>
<path d="M976.8 301.8 L979.6 302.6 L978.6 303.4 L980.6 305.4 L979.9 306 L978 304 L977.3 305 Z" stroke="none" fill="#c4323a" stroke-width="1"/>
<rect x="639.40" y="367.80" width="10.80" height="10.20" fill="#4b4a49" rx="2"/>
<text x="653.20" y="376.70" font-size="10" fill="#5e5e5e" textLength="340.90" lengthAdjust="spacingAndGlyphs" stroke="#5e5e5e" stroke-width="0.3">Diese Änderungen auf alle Zellen mit denselben Einstellungen anwenden</text>
<rect x="616.00" y="413.20" width="152.00" height="14.30" fill="#666666" rx="3"/>
<text x="626.30" y="424.30" font-size="10" fill="#ececec" textLength="130.30" lengthAdjust="spacingAndGlyphs" stroke="#ececec" stroke-width="0.3">Gesamte Auswahl aufheben</text>
<rect x="854.20" y="412.90" width="72.10" height="15.10" fill="#666666" rx="3"/>
<text x="864.50" y="424.80" font-size="10" fill="#ececec" textLength="50.80" lengthAdjust="spacingAndGlyphs" stroke="#ececec" stroke-width="0.3">Abbrechen</text>
<rect x="937.40" y="412.90" width="72.30" height="15.10" fill="#1b66d8" rx="3"/>
<text x="966.40" y="424.80" font-size="10" fill="#ffffff" textLength="13.20" lengthAdjust="spacingAndGlyphs" stroke="#ffffff" stroke-width="0.3">OK</text>
</svg>
</body></html>
